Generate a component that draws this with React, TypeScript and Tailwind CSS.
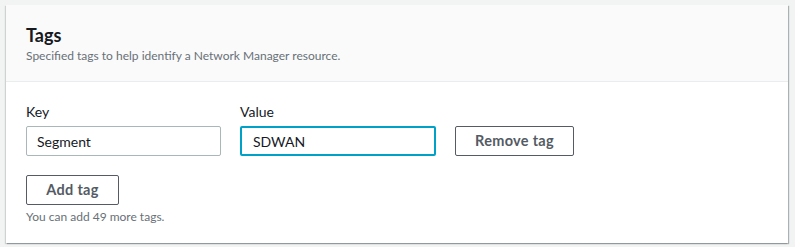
export default function App() {
  return (
    <div className="w-[795px] h-[247px] bg-[#f2f3f3] pt-[5px] pl-[6px] font-['Lato',sans-serif]">
      <div className="w-[782px] h-[238px] bg-white shadow-[1px_1px_1px_0_rgba(0,28,36,0.3),-1px_1px_1px_0_rgba(0,28,36,0.15)]">
        {/* Header */}
        <div className="h-[77px] bg-[#fafafa] border-b border-[#eaeded] px-5 pt-[19px]">
          <h2 className="text-[18px] leading-[22px] font-bold text-[#16191f]">Tags</h2>
          <p className="mt-[3px] text-[12px] leading-[14px] text-[#687078]">
            Specified tags to help identify a Network Manager resource.
          </p>
        </div>

        <div className="px-5 pt-[21px]">
          <div className="flex items-end gap-[19px]">
            <div className="flex flex-col">
              <label className="text-[14px] leading-[18px] text-[#16191f] mb-[5px]">Key</label>
              <input
                defaultValue="Segment"
                className="w-[195px] h-[30px] border border-[#aab7b8] rounded-[2px] px-[10px] text-[14px] text-[#16191f] outline-none"
              />
            </div>
            <div className="flex flex-col">
              <label className="text-[14px] leading-[18px] text-[#16191f] mb-[5px]">Value</label>
              <input
                defaultValue="SDWAN"
                className="w-[196px] h-[30px] border-2 border-[#00a1c9] rounded-[2px] px-[11px] text-[14px] text-[#16191f] outline-none"
              />
            </div>
            <button className="w-[119px] h-[30px] border border-[#545b64] rounded-[2px] bg-white text-[14.5px] tracking-[0.3px] font-bold text-[#545b64]">
              Remove tag
            </button>
          </div>

          <button className="mt-[19px] w-[93px] h-[30px] border border-[#545b64] rounded-[2px] bg-white text-[14.5px] tracking-[0.3px] font-bold text-[#545b64]">
            Add tag
          </button>
          <p className="mt-[5px] text-[12px] leading-[14px] text-[#687078]">You can add 49 more tags.</p>
        </div>
      </div>
    </div>
  );
}
